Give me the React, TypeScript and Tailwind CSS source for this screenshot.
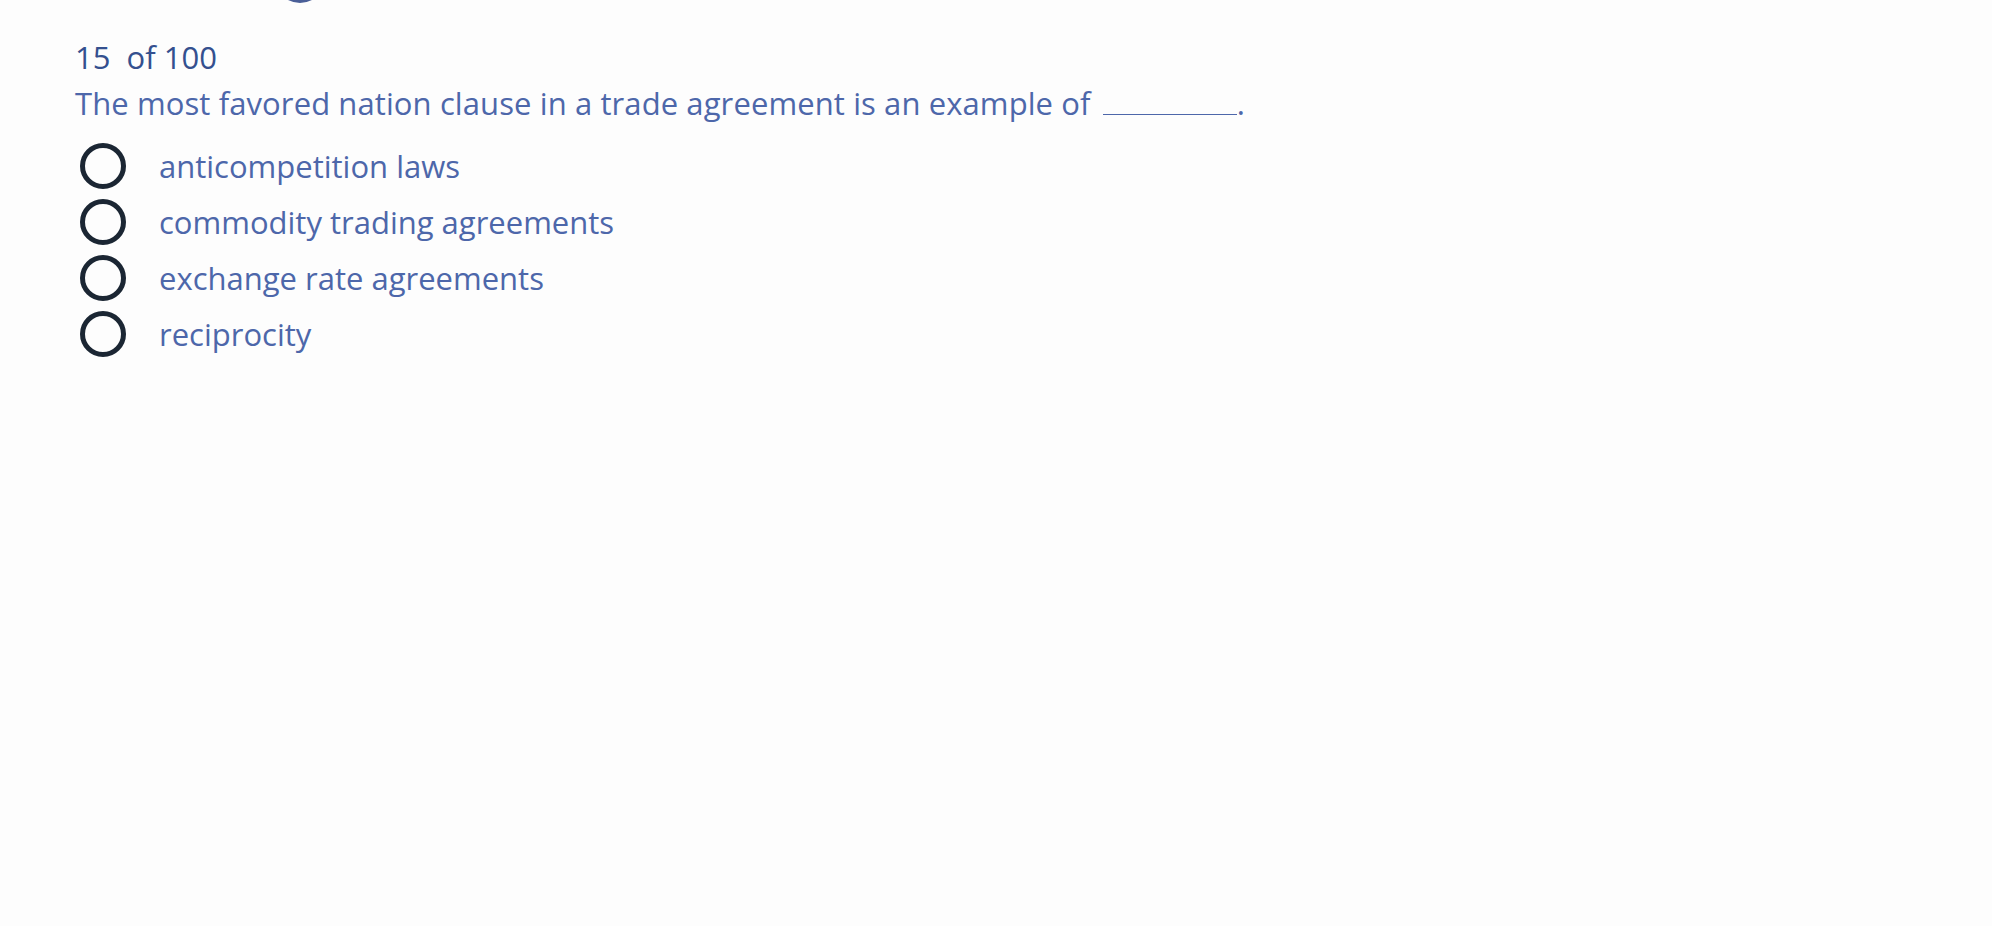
import React from "react";

const options = [
  "anticompetition laws",
  "commodity trading agreements",
  "exchange rate agreements",
  "reciprocity",
];

function RadioCircle() {
  return (
    <svg width="46" height="46" viewBox="0 0 46 46" className="shrink-0">
      <circle cx="23" cy="23" r="20.5" fill="none" stroke="#1b2633" strokeWidth="5" />
    </svg>
  );
}

export default function App() {
  return (
    <div
      className="w-full h-[926px] bg-[#fdfdfd] overflow-hidden"
      style={{ fontFamily: '"Open Sans", "Liberation Sans", sans-serif' }}
    >
      {/* bit of the heading above, cut off by the window */}
      <div className="h-[4px] pl-[288px]">
        <svg width="24" height="4" viewBox="0 0 24 4" className="block">
          <path d="M0 0 Q12 6 24 0 Z" fill="#4a5f98" />
        </svg>
      </div>

      <div className="pl-[75px] pt-[33px]">
        <div className="text-[31px] leading-[40px] font-normal text-[#34508f] whitespace-pre">15  of 100</div>
        <div className="mt-[6px] text-[31px] leading-[40px] font-normal text-[#4d67aa] tracking-[0.1px]">
          The most favored nation clause in a trade agreement is an example of{" "}
          <span className="inline-block ml-[4px] w-[134px] border-b-[1.5px] border-[#4d67aa] align-baseline h-[22px]"></span>.
        </div>

        <ul className="mt-[15px] flex flex-col">
          {options.map((opt) => (
            <li key={opt} className="flex items-center h-[56px] pl-[5px]">
              <RadioCircle />
              <span className="ml-[33px] text-[31px] leading-[40px] font-normal text-[#4d67aa]">{opt}</span>
            </li>
          ))}
        </ul>
      </div>
    </div>
  );
}
